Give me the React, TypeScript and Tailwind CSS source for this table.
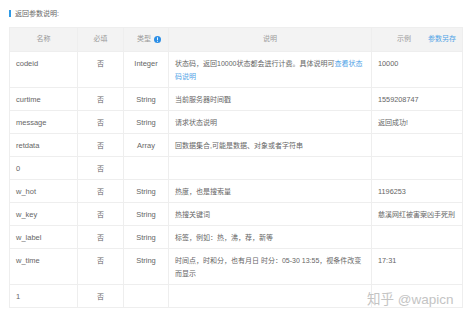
import React from "react";

type Row = {
  name: string;
  type: string;
  desc: React.ReactNode;
  ex: string;
};

const rows: Row[] = [
  {
    name: "codeid",
    type: "Integer",
    desc: (
      <>
        状态码，返回10000状态都会进行计费。具体说明可<span className="text-[#4fa3e6]">查看状态</span>
        <br />
        <span className="text-[#4fa3e6]">码说明</span>
      </>
    ),
    ex: "10000",
  },
  { name: "curtime", type: "String", desc: "当前服务器时间戳", ex: "1559208747" },
  { name: "message", type: "String", desc: "请求状态说明", ex: "返回成功!" },
  { name: "retdata", type: "Array", desc: "回数据集合,可能是数据、对象或者字符串", ex: "" },
  { name: "0", type: "", desc: "", ex: "" },
  { name: "w_hot", type: "String", desc: "热度，也是搜索量", ex: "1196253" },
  { name: "w_key", type: "String", desc: "热搜关键词", ex: "慈溪网红被害案凶手死刑" },
  { name: "w_label", type: "String", desc: "标签，例如：热，沸，荐，新等", ex: "" },
  {
    name: "w_time",
    type: "String",
    desc: (
      <>
        时间点，时和分，也有月日 时分：05-30 13:55，视条件改变
        <br />
        而显示
      </>
    ),
    ex: "17:31",
  },
  { name: "1", type: "", desc: "", ex: "" },
];

const font = "[font-family:'Liberation_Sans','Noto_Sans_CJK_SC',sans-serif]";

export default function App() {
  return (
    <div
      className={`relative w-[474px] h-[323px] bg-white overflow-hidden text-[#666] ${font}`}
    >
      <div className="flex items-center h-[7px] mt-[10px] ml-[9px]">
        <div className="w-[2px] h-[7px] bg-[#2f9ae6]" />
        <span className="ml-[4px] text-[7px] leading-[7px] text-[#666]">返回参数说明:</span>
      </div>

      <table className="ml-[9px] mt-[10px] w-[453px] table-fixed border-collapse">
        <colgroup>
          <col className="w-[68px]" />
          <col className="w-[46px]" />
          <col className="w-[45px]" />
          <col className="w-[203px]" />
          <col className="w-[91px]" />
        </colgroup>
        <thead>
          <tr className="bg-[#f3f3f3] text-[#9a9a9a] text-[7px]">
            <th className="h-[24px] p-0 font-normal text-center border border-[#eeeeee]">名称</th>
            <th className="h-[24px] p-0 font-normal text-center border border-[#eeeeee]">必填</th>
            <th className="h-[24px] p-0 font-normal border border-[#eeeeee]">
              <div className="flex items-center justify-center pl-[6px]">
                <span>类型</span>
                <svg className="ml-[3px]" width="7" height="7" viewBox="0 0 7 7">
                  <circle cx="3.5" cy="3.5" r="3.5" fill="#2b8ee6" />
                  <rect x="3.05" y="1.3" width="0.9" height="2.9" fill="#fff" />
                  <rect x="3.05" y="4.9" width="0.9" height="0.9" fill="#fff" />
                </svg>
              </div>
            </th>
            <th className="h-[24px] p-0 font-normal text-center border border-[#eeeeee]">说明</th>
            <th className="h-[24px] p-0 font-normal border border-[#eeeeee]">
              <div className="flex items-center justify-end pr-[6px]">
                <span>示例</span>
                <span className="ml-[17px] text-[#4fa3e6]">参数另存</span>
              </div>
            </th>
          </tr>
        </thead>
        <tbody>
          {rows.map((r, i) => (
            <tr key={i} className="align-top">
              <td className="pl-[6px] pt-[5px] pb-[4px] leading-[13px] text-[7.5px] border border-[#eeeeee]">
                {r.name}
              </td>
              <td className="pt-[5px] pb-[4px] leading-[13px] text-[7px] text-center border border-[#eeeeee]">
                否
              </td>
              <td className="pt-[5px] pb-[4px] leading-[13px] text-[7.5px] text-center border border-[#eeeeee]">
                {r.type}
              </td>
              <td className="pl-[6px] pr-[2px] pt-[5px] pb-[4px] leading-[13px] text-[7px] whitespace-nowrap border border-[#eeeeee]">
                {r.desc}
              </td>
              <td
                className={`pl-[6px] pt-[5px] pb-[4px] leading-[13px] whitespace-nowrap border border-[#eeeeee] ${
                  /^[0-9:]+$/.test(r.ex) ? "text-[7.3px]" : "text-[7px]"
                }`}
              >
                {r.ex}
              </td>
            </tr>
          ))}
        </tbody>
      </table>

      <div className="absolute left-[367px] top-[291px] text-[13.5px] leading-[18px] text-[#c4c4c4] whitespace-nowrap">
        知乎 @wapicn
      </div>
    </div>
  );
}
